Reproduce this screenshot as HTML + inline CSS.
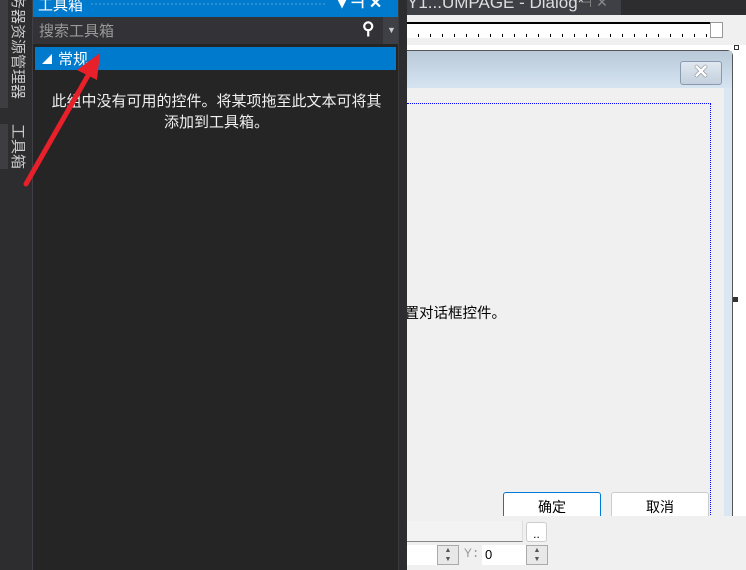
<!DOCTYPE html><html><head><meta charset="utf-8"><style>
body{margin:0;width:746px;height:570px;overflow:hidden;position:relative;background:#2d2d30;font-family:"Liberation Sans","Noto Sans CJK SC",sans-serif}
div{position:absolute;box-sizing:border-box}
.cj{font-family:"Noto Sans CJK SC",sans-serif}
</style></head><body>
<div style="left:0;top:0;width:33px;height:570px;background:#2d2d30;border-right:1px solid #3f3f46"></div>
<div style="left:0;top:0;width:8px;height:108px;background:#3e3e42"></div>
<div style="left:0;top:124px;width:8px;height:45px;background:#3e3e42"></div>
<div class="cj" style="left:9px;top:-6px;width:18px;font-size:15px;line-height:18px;color:#c8c8c8;writing-mode:vertical-rl;text-orientation:sideways;white-space:nowrap">务器资源管理器</div>
<div class="cj" style="left:9px;top:124px;width:18px;font-size:15px;line-height:18px;color:#c8c8c8;writing-mode:vertical-rl;text-orientation:sideways;white-space:nowrap">工具箱</div>
<div style="left:33px;top:0;width:367px;height:570px;background:#252526"></div>
<div style="left:33px;top:0;width:367px;height:17px;background:#007acc"></div>
<div class="cj" style="left:38px;top:-6px;font-size:15px;color:#fff">工具箱</div>
<div style="left:90px;top:2px;width:235px;height:5px;background-image:radial-gradient(#3a94d6 1px,transparent 1px);background-size:4px 4px"></div>
<div style="left:338px;top:-7px;font-size:16px;color:#fff;font-weight:bold">▾ ⊣ ✕</div>
<div style="left:33px;top:17px;width:367px;height:27px;background:#333337"></div>
<div class="cj" style="left:39px;top:20px;font-size:15px;color:#999">搜索工具箱</div>
<div style="left:362px;top:19px;font-size:17px;color:#fff;font-weight:bold">⚲</div>
<div style="left:383px;top:17px;width:17px;height:27px;background:#3f3f46;color:#ccc;font-size:9px;text-align:center;line-height:27px">▼</div>
<div style="left:35px;top:47px;width:361px;height:23px;background:#007acc"></div>
<div style="left:42px;top:51px;font-size:10px;color:#fff">◢</div>
<div class="cj" style="left:58px;top:48px;font-size:15px;color:#fff">常规</div>
<div class="cj" style="left:33px;top:90px;width:367px;text-align:center;font-size:15px;line-height:21px;color:#f0f0f0">此组中没有可用的控件。将某项拖至此文本可将其<br>添加到工具箱。</div>
<div style="left:407px;top:0;width:339px;height:15px;background:#2d2d30"></div>
<div style="left:407px;top:0;width:214px;height:15px;background:#3f3f46"></div>
<div style="left:407px;top:-7px;font-size:17px;color:#ddd;white-space:nowrap">Y1...UMPAGE - Dialog*</div>
<div style="left:580px;top:-6px;font-size:14px;color:#888">⊣ ✕</div>
<div style="left:407px;top:15px;width:339px;height:502px;background:#fff"></div>
<div style="left:407px;top:15px;width:339px;height:30px;background:#f0f0f0"></div>
<div style="left:407px;top:22px;width:303px;height:16px;background:#fff;border-top:2px solid #000;background-image:repeating-linear-gradient(90deg,transparent 0 11px,#000 11px 12px);background-size:12px 3px;background-position:0 10px;background-repeat:repeat-x"></div>
<div style="left:710px;top:22px;width:13px;height:16px;border:1px solid #999;background:#fff"></div>
<div style="left:734px;top:45px;width:5px;height:5px;border:1px solid #333;background:#fff"></div>
<div style="left:733px;top:297px;width:5px;height:5px;background:#333"></div>
<div style="left:400px;top:50px;width:333px;height:480px;border:1px solid #555;border-radius:0 6px 0 0;background:#dae6f2"></div>
<div style="left:407px;top:51px;width:325px;height:37px;background:linear-gradient(#b9c9d8,#d6e4f2)"></div>
<div style="left:680px;top:61px;width:42px;height:24px;border:1px solid #8a9bb0;border-radius:3px;background:linear-gradient(#e0e8f0,#c4d0de);text-align:center;font-size:19px;line-height:22px;color:#fff;font-weight:bold;text-shadow:0 0 1px #444,0 0 1px #444">✕</div>
<div style="left:407px;top:88px;width:317px;height:430px;background:#f0f0f0;overflow:hidden">
<div class="cj" style="left:-17px;top:214px;font-size:14.5px;color:#000;white-space:nowrap">设置对话框控件。</div>
</div>
<div style="left:407px;top:103px;width:304px;height:420px;border-top:1px dotted #00f;border-right:1px dotted #00f"></div>
<div class="cj" style="left:503px;top:492px;width:98px;height:30px;border:1px solid #0078d7;border-radius:3px;background:#fff;text-align:center;font-size:14px;line-height:28px">确定</div>
<div class="cj" style="left:611px;top:492px;width:98px;height:30px;border:1px solid #ccc;border-radius:3px;background:#fff;text-align:center;font-size:14px;line-height:28px">取消</div>
<div style="left:407px;top:516px;width:339px;height:54px;background:#f0f0f0"></div>
<div style="left:407px;top:521px;width:116px;height:21px;border-bottom:1px solid #888;border-right:1px solid #ddd;background:#f3f3f3"></div>
<div style="left:526px;top:522px;width:21px;height:20px;border:1px solid #ccc;border-radius:3px;background:#fff;font-size:12px;text-align:center;line-height:22px">..</div>
<div style="left:407px;top:545px;width:30px;height:20px;background:#fff"></div>
<div style="left:437px;top:545px;width:22px;height:20px;border:1px solid #aaa;background:#e8e8e8;font-size:7px;color:#555;text-align:center;line-height:9px">▲<br>▼</div>
<div style="left:464px;top:546px;font-size:13px;color:#999;font-family:'Liberation Mono',monospace">Y:</div>
<div style="left:482px;top:545px;width:44px;height:20px;background:#fff;font-size:13px;line-height:20px;padding-left:3px">0</div>
<div style="left:526px;top:545px;width:22px;height:20px;border:1px solid #aaa;background:#e8e8e8;font-size:7px;color:#555;text-align:center;line-height:9px">▲<br>▼</div>
<div style="left:398px;top:0;width:9px;height:570px;background:#2d2d30;border-left:1px solid #3a3a3d"></div>
<svg style="position:absolute;left:0;top:0" width="746" height="570"><line x1="26" y1="184" x2="90" y2="72" stroke="#e8202a" stroke-width="5" stroke-linecap="round"/><polygon points="100,53 77,70 97,80" fill="#e8202a"/></svg>
</body></html>
